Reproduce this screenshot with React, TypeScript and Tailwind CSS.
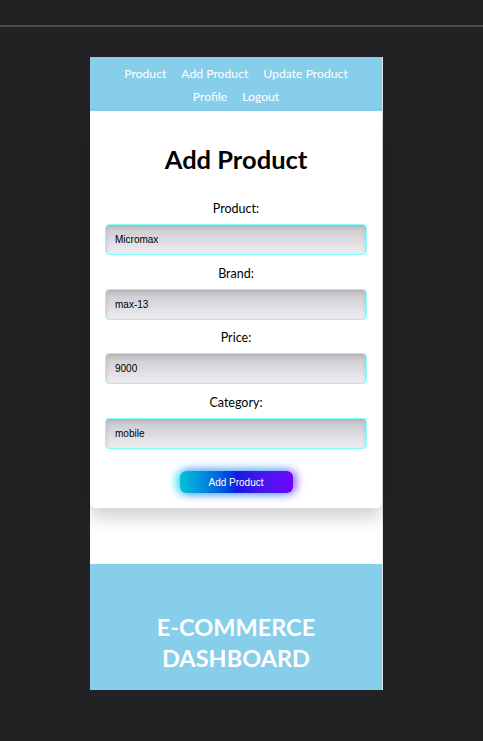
import React from "react";

const links = ["Product", "Add Product", "Update Product", "Profile", "Logout"];

const fields = [
  { label: "Product:", value: "Micromax" },
  { label: "Brand:", value: "max-13" },
  { label: "Price:", value: "9000" },
  { label: "Category:", value: "mobile" },
];

function Nav() {
  return (
    <nav className="bg-[#87CEEB] h-[54px] px-[20px] pt-[5px] flex flex-wrap justify-center content-start">
      {links.map((l) => (
        <a
          key={l}
          href="#"
          className="text-white text-[12.2px] leading-[23px] mx-[7.5px]"
        >
          {l}
        </a>
      ))}
    </nav>
  );
}

function AddProduct() {
  return (
    <div className="bg-white rounded-b-[6px] shadow-[0_10px_18px_rgba(0,0,0,0.18)] px-[15px] pt-[33px] pb-[15px] flex flex-col items-center">
      <h1 className="text-[25.5px] font-bold leading-[30px] text-black mb-[25px]">
        Add Product
      </h1>
      {fields.map((f) => (
        <div key={f.label} className="w-full flex flex-col items-center mb-[8.5px]">
          <label className="text-[12.5px] leading-[19px] text-black mb-[6px]">
            {f.label}
          </label>
          <input
            readOnly
            value={f.value}
            className="w-full h-[31px] rounded-[4px] border border-[#80ffff] bg-linear-to-b from-[#c7c7cc] to-[#efeff3] shadow-[inset_0_2px_5px_rgba(0,0,0,0.12)] pl-[9px] text-[10px] text-black outline-none [font-family:'Liberation_Sans',Arial,sans-serif]"
          />
        </div>
      ))}
      <button className="mt-[14px] w-[113px] h-[22px] rounded-[6px] bg-linear-to-r from-[#00c4d6] via-[#1717e0] to-[#7000ff] text-white text-[10px] shadow-[-3px_0_10px_rgba(0,229,255,0.8),3px_0_10px_rgba(138,43,226,0.8)] [font-family:'Liberation_Sans',Arial,sans-serif]">
        Add Product
      </button>
    </div>
  );
}

export default function App() {
  return (
    <div className="w-[483px] h-[741px] bg-[#222224] overflow-hidden [font-family:Lato,'Noto_Sans',sans-serif]">
      <div className="h-[27px] bg-[#212123] border-b-2 border-[#4a4a4c]" />
      <div className="ml-[90px] mt-[30px] w-[293px] h-[633px] bg-white border-r border-[#dfe3e6] flex flex-col">
        <Nav />
        <AddProduct />
        <div className="h-[56px]" />
        <footer className="flex-1 bg-[#87CEEB] pt-[48px] text-center">
          <h2 className="text-white font-bold text-[23.5px] leading-[31px]">
            E-COMMERCE
            <br />
            DASHBOARD
          </h2>
        </footer>
      </div>
    </div>
  );
}
